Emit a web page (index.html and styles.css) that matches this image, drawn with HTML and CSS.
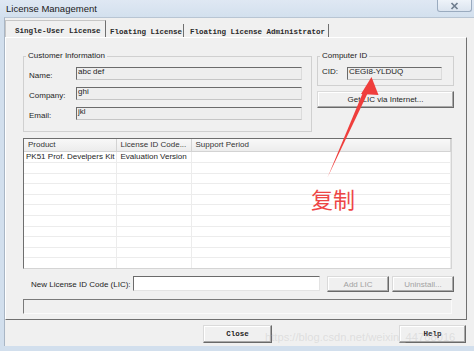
FILE: index.html
```html
<!DOCTYPE html>
<html>
<head>
<meta charset="utf-8">
<title>License Management</title>
<link rel="stylesheet" href="styles.css">
</head>
<body>
<div class="window">
  <div class="titlebar">
    <span class="title">License Management</span>
    <div class="close-btn"><svg width="11" height="8" viewBox="0 0 11 8"><path d="M2.5 1 L8.5 7 M8.5 1 L2.5 7" stroke="#6f7e8f" stroke-width="1.7"/></svg></div>
  </div>
  <div class="client">
    <div class="tabs">
      <div class="tabstrip">
        <div class="tab active">Single-User License</div>
        <div class="tab tab2">Floating License</div>
        <div class="tab tab3">Floating License Administrator</div>
      </div>
      <div class="panel">
        <div class="top-row">
          <fieldset class="group customer">
            <legend>Customer Information</legend>
            <div class="gbody">
              <div class="frow"><label>Name:</label><div class="field">abc def</div></div>
              <div class="frow"><label>Company:</label><div class="field">ghi</div></div>
              <div class="frow"><label>Email:</label><div class="field">jkl</div></div>
            </div>
          </fieldset>
          <div class="right-col">
            <fieldset class="group computer">
              <legend>Computer ID</legend>
              <div class="gbody">
                <div class="frow"><label>CID:</label><div class="field">CEGI8-YLDUQ</div></div>
              </div>
            </fieldset>
            <button class="btn getlic">Get LIC via Internet...</button>
          </div>
        </div>
        <div class="listview">
          <table>
            <colgroup><col class="c1"><col class="c2"><col></colgroup>
            <thead><tr><th>Product</th><th>License ID Code...</th><th>Support Period</th></tr></thead>
            <tbody>
              <tr class="first"><td>PK51 Prof. Develpers Kit</td><td class="pad">Evaluation Version</td><td></td></tr>
              <tr><td></td><td></td><td></td></tr>
              <tr><td></td><td></td><td></td></tr>
              <tr><td></td><td></td><td></td></tr>
              <tr><td></td><td></td><td></td></tr>
              <tr><td></td><td></td><td></td></tr>
              <tr><td></td><td></td><td></td></tr>
              <tr><td></td><td></td><td></td></tr>
              <tr><td></td><td></td><td></td></tr>
              <tr><td></td><td></td><td></td></tr>
              <tr><td></td><td></td><td></td></tr>
            </tbody>
          </table>
        </div>
        <div class="lic-row">
          <label class="lic-label">New License ID Code (LIC):</label>
          <div class="lic-input"></div>
          <button class="btn small add" disabled>Add LIC</button>
          <button class="btn small uninstall" disabled>Uninstall...</button>
        </div>
        <div class="status"></div>
      </div>
    </div>
    <div class="bottom-row">
      <button class="btn mono closeb">Close</button>
      <button class="btn mono helpb">Help</button>
    </div>
  </div>
</div>
<svg class="arrow" width="474" height="351" viewBox="0 0 474 351">
  <polygon points="327.5,177.5 364.2,89.5 368.6,91.2" fill="#ef3e3c"/>
  <polygon points="371.5,77 361,94 378.5,95" fill="#ef3e3c"/>
</svg>
<div class="annot">复制</div>
<div class="watermark">https://blog.csdn.net/weixin_44788016</div>
</body>
</html>
```
FILE: styles.css
```css
* { box-sizing: border-box; }
html, body { margin: 0; padding: 0; }
body {
  width: 474px;
  height: 351px;
  overflow: hidden;
  position: relative;
  background: #d2dfed;
  font-family: "Liberation Sans", Arial, sans-serif;
  font-size: 8px;
  color: #1e1e1e;
}
.window { display: flex; flex-direction: column; height: 351px; }
.titlebar {
  height: 17px;
  flex: none;
  display: flex;
  align-items: center;
  padding-left: 6px;
  background: linear-gradient(#dfe8f3, #d3e0ee);
}
.title { font-size: 9.5px; color: #1a1a1a; }
.close-btn {
  margin-left: auto;
  margin-right: 2px;
  align-self: flex-start;
  width: 35px;
  height: 12px;
  border: 1px solid #9aabbf;
  border-top: none;
  border-radius: 0 0 3px 3px;
  background: linear-gradient(#eef3f9, #dbe4ef);
  display: flex;
  align-items: center;
  justify-content: center;
}
.client {
  flex: 1;
  margin: 0 0 5px 4px;
  background: #f0f0f0;
  border-left: 1px solid #a9b6c5;
  border-top: 1px solid #b8c5d3;
  display: flex;
  flex-direction: column;
}
.tabs { margin-top: 2px; width: 462px; }
.tabstrip { display: flex; align-items: flex-end; height: 17px; }
.tab {
  font-family: "Liberation Mono", "Courier New", monospace;
  font-weight: bold;
  font-size: 7.5px;
  line-height: 10px;
  height: 13px;
  padding-top: 3px;
  border-right: 1px solid #6f6f6f;
  white-space: nowrap;
  color: #2a2a2a;
}
.tab.active {
  height: 17px;
  width: 101px;
  padding-top: 5px;
  padding-left: 9px;
  border-top: 1px solid #c6c6c6;
  border-left: 1px solid #c6c6c6;
}
.tab2 { width: 78px; padding-left: 4px; }
.tab3 { width: 145px; padding-left: 6px; }
.panel {
  height: 283px;
  border-top: 1px solid #ffffff;
  border-left: 1px solid #ffffff;
  border-right: 1px solid #707070;
  border-bottom: 1px solid #707070;
  padding: 13px 12px 0 17px;
  display: flex;
  flex-direction: column;
}
.top-row { display: flex; gap: 5px; align-items: flex-start; }
fieldset.group {
  margin: 0;
  padding: 0;
  min-width: 0;
  border: 1px solid #d0d0d0;
}
legend {
  padding: 0 2px;
  margin-left: 2px;
  font-size: 8px;
  line-height: 10px;
  color: #222;
}
.customer { width: 289px; }
.customer .gbody {
  padding: 6px 9px 9px 5px;
  display: flex;
  flex-direction: column;
  gap: 5px;
}
.frow { display: flex; }
.frow label { flex: none; }
.customer label { width: 47px; padding-top: 2px; line-height: 13px; }
.field {
  height: 13px;
  border: 1px solid;
  border-color: #6b6b6b #dcdcdc #c6c6c6 #6b6b6b;
  background: #eeeeee;
  line-height: 8px;
  padding-left: 1px;
  white-space: nowrap;
  overflow: hidden;
  color: #1e1e1e;
}
.customer .field { width: 226px; }
.right-col { width: 137px; display: flex; flex-direction: column; }
.computer { width: 137px; margin-top: -1px; }
.computer .gbody { padding: 6px 11px 5px 4px; }
.computer label { width: 25px; line-height: 9px; }
.computer .field { width: 95px; }
.btn {
  font-family: "Liberation Sans", Arial, sans-serif;
  font-size: 8px;
  color: #1e1e1e;
  background: #f0f0f0;
  border: 1px solid;
  border-color: #dadada #696969 #696969 #dadada;
  box-shadow: inset -1px -1px 0 #a9a9a9, inset 1px 1px 0 #ffffff;
  padding: 0;
  margin: 0;
  white-space: nowrap;
}
.btn:disabled { color: #a2a2a2; }
.getlic { margin-top: 5px; width: 137px; height: 17px; }
.listview {
  margin-top: 6px;
  margin-right: 2px;
  height: 131px;
  border: 1px solid;
  border-color: #6e6e6e #d4d4d4 #d4d4d4 #6e6e6e;
  background: #ffffff;
  overflow: hidden;
}
table { border-collapse: collapse; table-layout: fixed; width: 100%; }
col.c1 { width: 92px; }
col.c2 { width: 75px; }
th {
  height: 12px;
  padding: 0 0 0 4px;
  background: linear-gradient(#f8f8f8, #ececec);
  font-weight: normal;
  text-align: left;
  line-height: 11px;
  color: #333;
  border-right: 1px solid #d3d3d3;
  border-bottom: 1px solid #d3d3d3;
  white-space: nowrap;
  overflow: hidden;
}
tbody tr { height: 10.6px; }
tbody tr.first { height: 11.6px; }
td {
  padding: 0 0 0 2px;
  line-height: 9px;
  border-right: 1px solid #ececec;
  border-bottom: 1px solid #ececec;
  white-space: nowrap;
  overflow: hidden;
}
td.pad { padding-left: 4px; }
.lic-row {
  display: flex;
  align-items: flex-start;
  margin-top: 7px;
  padding-left: 8px;
}
.lic-label { width: 102px; line-height: 17px; flex: none; }
.lic-input {
  width: 187px;
  height: 15px;
  background: #ffffff;
  border: 1px solid;
  border-color: #6b6b6b #e3e3e3 #e3e3e3 #6b6b6b;
}
.small { width: 62px; height: 16px; }
.add { margin-left: 7px; }
.uninstall { margin-left: 3px; }
.status {
  margin-top: 6px;
  margin-right: 2px;
  height: 15px;
  border: 1px solid;
  border-color: #7a7a7a #fafafa #fafafa #7a7a7a;
}
.bottom-row {
  display: flex;
  justify-content: flex-end;
  gap: 127px;
  margin-top: 5px;
  padding-right: 8px;
}
.mono {
  font-family: "Liberation Mono", "Courier New", monospace;
  font-weight: bold;
  font-size: 7.5px;
  height: 18px;
}
.closeb { width: 69px; }
.helpb { width: 67px; }
.arrow { position: absolute; left: 0; top: 0; pointer-events: none; }
.annot {
  position: absolute;
  left: 311px;
  top: 186px;
  font-family: "Noto Sans CJK SC", sans-serif;
  font-size: 22px;
  line-height: 24px;
  color: #ee4646;
}
.watermark {
  position: absolute;
  left: 265px;
  top: 331px;
  font-family: "Liberation Sans", Arial, sans-serif;
  font-size: 11.2px;
  color: rgba(195, 195, 195, 0.4);
  white-space: nowrap;
  pointer-events: none;
}
```
